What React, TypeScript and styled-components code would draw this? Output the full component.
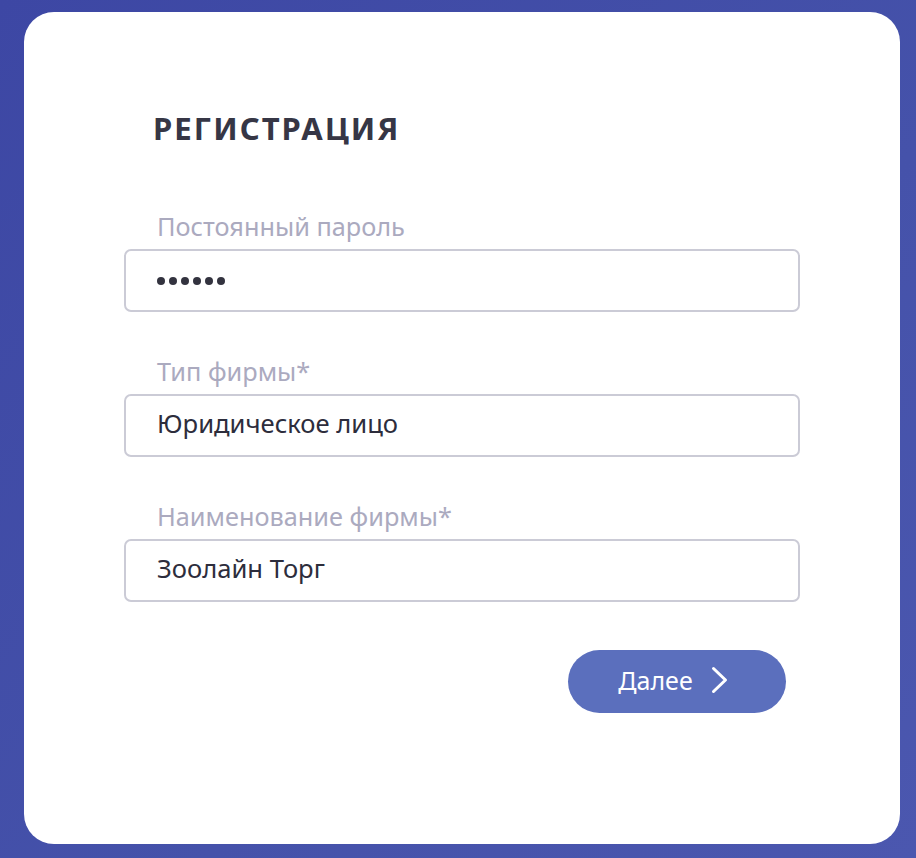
import React from "react";
import styled, { createGlobalStyle } from "styled-components";

const Global = createGlobalStyle`
  html, body { margin: 0; padding: 0; }
  body {
    background: linear-gradient(135deg, #3d47a4 0%, #4552aa 60%, #4b57af 100%);
    min-height: 858px;
    font-family: "Noto Sans", "Open Sans", sans-serif;
  }
  * { box-sizing: border-box; }
`;

const Page = styled.div`
  padding: 12px 16px 14px 24px;
`;

const Card = styled.div`
  background: #ffffff;
  border-radius: 30px;
  height: 832px;
  padding: 96px 100px 0 100px;
  display: flex;
  flex-direction: column;
`;

const Title = styled.h1`
  margin: 0 0 0 29px;
  font-size: 31px;
  line-height: 40px;
  font-weight: 700;
  letter-spacing: 2px;
  color: #363645;
`;

const Form = styled.div`
  margin-top: 62px;
  display: flex;
  flex-direction: column;
  gap: 43px;
`;

const Field = styled.div`
  display: flex;
  flex-direction: column;
  gap: 6px;
`;

const Label = styled.label`
  padding-left: 33px;
  font-size: 25.3px;
  line-height: 33px;
  color: #abaabf;
`;

const Input = styled.div`
  height: 63px;
  border: 2px solid #cbcbd6;
  border-radius: 7px;
  padding: 0 0 4px 31px;
  display: flex;
  align-items: center;
  font-size: 25.6px;
  color: #2d2d3c;
`;

const Actions = styled.div`
  margin-top: 48px;
  display: flex;
  justify-content: flex-end;
  padding-right: 14px;
`;

const Button = styled.button`
  width: 218px;
  height: 63px;
  border: none;
  border-radius: 32px;
  background: #5b6fbd;
  color: #ffffff;
  font-family: inherit;
  font-size: 25px;
  display: flex;
  align-items: center;
  justify-content: center;
  gap: 18px;
  padding: 0 8px 3px 0;
  cursor: pointer;
`;

const Dots = styled.span`
  display: flex;
  gap: 4px;
  margin-top: 4px;
`;

const Dot = styled.span`
  width: 8px;
  height: 8px;
  border-radius: 50%;
  background: #33333f;
`;

export default function App() {
  return (
    <>
      <Global />
      <Page>
        <Card>
          <Title>РЕГИСТРАЦИЯ</Title>
          <Form>
            <Field>
              <Label>Постоянный пароль</Label>
              <Input>
                <Dots>
                  {Array.from({ length: 6 }).map((_, i) => (
                    <Dot key={i} />
                  ))}
                </Dots>
              </Input>
            </Field>
            <Field>
              <Label>Тип фирмы*</Label>
              <Input>Юридическое лицо</Input>
            </Field>
            <Field>
              <Label>Наименование фирмы*</Label>
              <Input>Зоолайн Торг</Input>
            </Field>
          </Form>
          <Actions>
            <Button>
              Далее
              <svg width="17" height="28" viewBox="0 0 17 28" fill="none">
                <path d="M2.5 2.5 L14.5 14 L2.5 25.5" stroke="#ffffff" strokeWidth="3" strokeLinecap="round" strokeLinejoin="round" />
              </svg>
            </Button>
          </Actions>
        </Card>
      </Page>
    </>
  );
}
